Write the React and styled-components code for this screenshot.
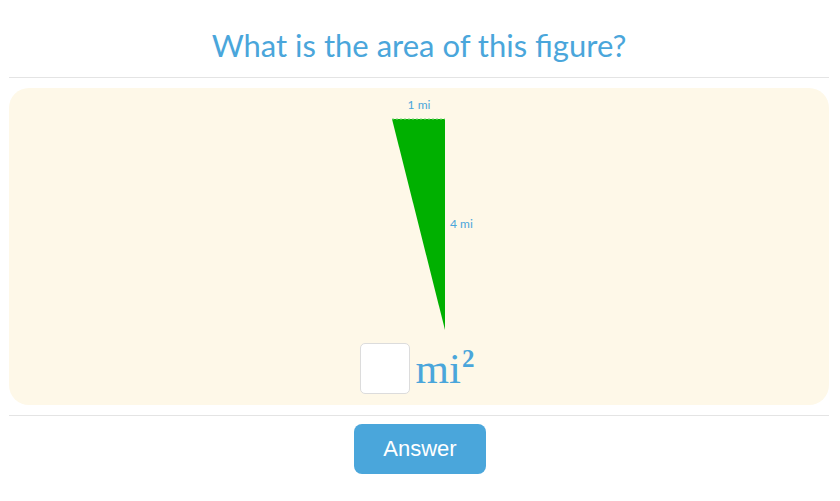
import React from "react";
import styled, { createGlobalStyle } from "styled-components";

const Global = createGlobalStyle`
  body {
    margin: 0;
    background: #fff;
    font-family: Lato, "Open Sans", sans-serif;
  }
`;

const Page = styled.div`
  padding: 0 11px 0 9px;
  display: flex;
  flex-direction: column;
`;

const Title = styled.h1`
  margin: 0;
  height: 78px;
  display: flex;
  align-items: center;
  justify-content: center;
  padding-top: 12px;
  box-sizing: border-box;
  font-size: 31px;
  font-weight: 400;
  color: #4aa6db;
  border-bottom: 1px solid #e4e4e4;
`;

const Panel = styled.div`
  margin-top: 10px;
  height: 317px;
  background: #fef8e8;
  border-radius: 20px;
  display: flex;
  flex-direction: column;
  align-items: center;
  padding-top: 8px;
  box-sizing: border-box;
`;

const Figure = styled.svg`
  display: block;
  margin-left: 14px;
  overflow: visible;
`;

const Label = styled.text`
  font-family: Lato, "Open Sans", sans-serif;
  font-size: 12px;
  fill: #4aa6db;
`;

const AnswerRow = styled.div`
  display: flex;
  align-items: center;
  gap: 6px;
  margin-top: 11px;
  margin-right: 4px;
`;

const Box = styled.input`
  width: 50px;
  height: 51px;
  box-sizing: border-box;
  border: 1px solid #dcdcdc;
  border-radius: 5px;
  background: #fff;
  outline: none;
`;

const Unit = styled.span`
  font-family: "Liberation Serif", "Times New Roman", serif;
  font-size: 43px;
  color: #4aa6db;
  line-height: 1;
  padding-bottom: 2px;
  sup {
    font-size: 25px;
    vertical-align: 16px;
    font-weight: 700;
    margin-left: 1px;
  }
`;

const Divider = styled.div`
  margin-top: 10px;
  border-top: 1px solid #e4e4e4;
`;

const Footer = styled.div`
  display: flex;
  justify-content: center;
  padding-top: 8px;
  margin-left: 2px;
`;

const Button = styled.button`
  width: 132px;
  height: 50px;
  border: none;
  border-radius: 8px;
  background: #4aa6db;
  color: #fff;
  font-family: "Liberation Sans", Arial, sans-serif;
  font-size: 22px;
  cursor: pointer;
`;

const App = () => (
  <Page>
    <Global />
    <Title>What is the area of this figure?</Title>
    <Panel>
      <Figure width="120" height="236" viewBox="0 0 120 236">
        <Label x="53" y="13" textAnchor="middle">1 mi</Label>
        <polygon points="26,23 79,23 79,234" fill="#00b000" />
        <line x1="26" y1="23" x2="79" y2="23" stroke="#7fd67f" strokeWidth="1" strokeDasharray="2 2" />
        <Label x="84" y="132">4 mi</Label>
      </Figure>
      <AnswerRow>
        <Box type="text" />
        <Unit>
          mi<sup>2</sup>
        </Unit>
      </AnswerRow>
    </Panel>
    <Divider />
    <Footer>
      <Button>Answer</Button>
    </Footer>
  </Page>
);

export default App;
